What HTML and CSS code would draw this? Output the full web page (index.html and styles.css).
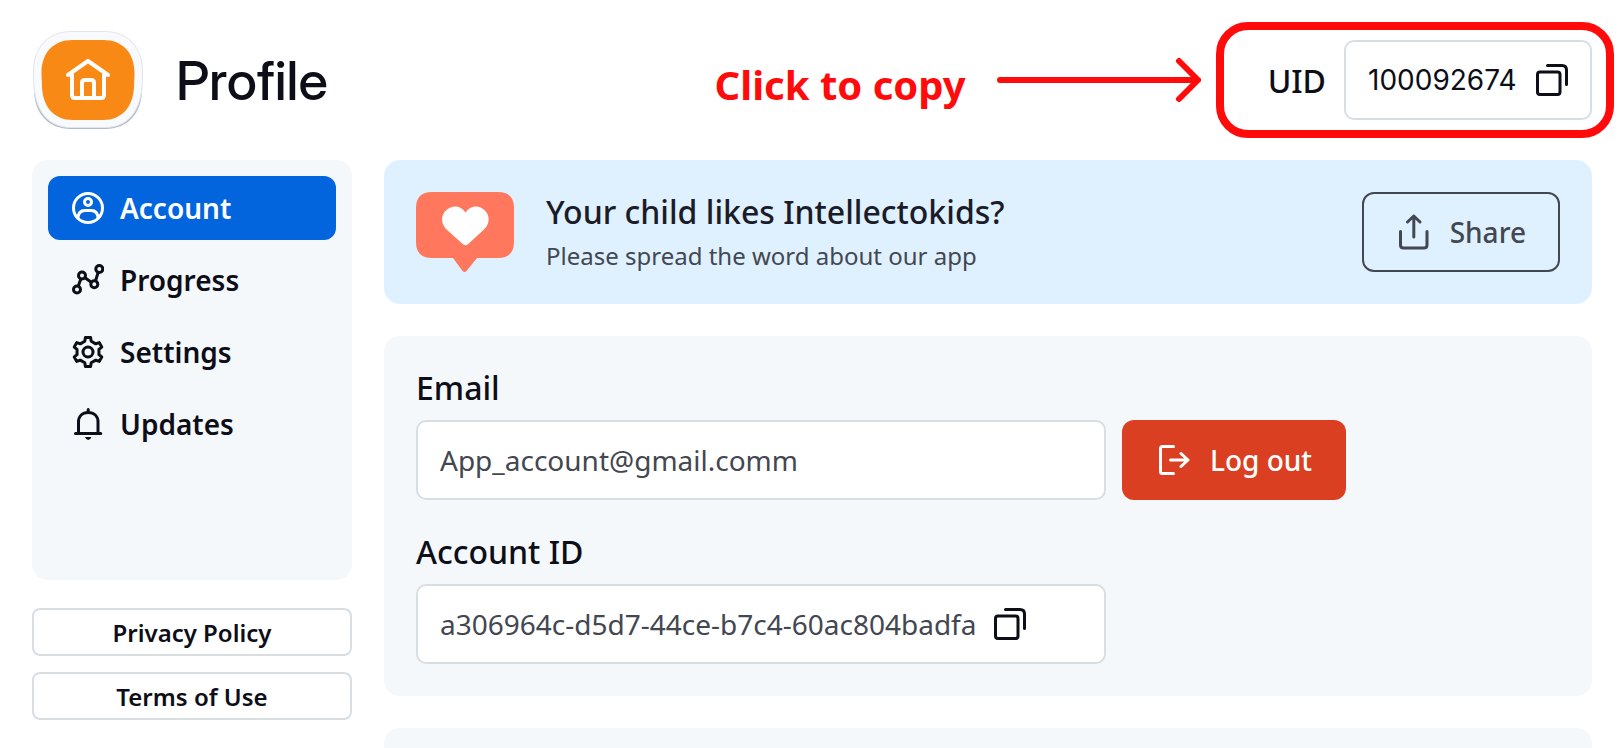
FILE: index.html
```html
<!DOCTYPE html>
<html lang="en">
<head>
    <meta charset="UTF-8">
    <meta name="viewport" content="width=device-width, initial-scale=1.0">
    <title>Profile</title>
    <link rel="stylesheet" href="styles.css">
</head>
<body>
    <header class="header">
        <a href="#" class="home-link" aria-label="Home">
            <svg class="home-icon" width="112" height="98" viewBox="-1 0 112 98">
                <path fill="#b3bccb" d="M38 1H72C95 1 109 17 109 40V58C109 82 95 98 72 98H38C15 98 1 82 1 58V40C1 17 15 1 38 1Z"/>
                <path fill="#f8fafd" stroke="#e1e5ec" d="M38 .5H72C95 .5 109.500 17 109.500 40C109.500 46 109.500 50 109 56C107 80 95 96.500 72 96.500H38C15 96.500 3 80 1 56C.5 50 .5 46 .5 40C.5 17 15 .5 38 .5Z"/>
                <path fill="#f88915" d="M40 9H70C90 9 101.500 22 101.500 42C101.500 48 101 52 101 56C100 76 89 89 70 89H40C21 89 10 76 9 56C9 52 8.500 48 8.500 42C8.500 22 20 9 40 9Z"/>
                <g fill="none" stroke="#fff" stroke-width="4" stroke-linecap="round" stroke-linejoin="round">
                    <path d="M35 44L55 30L75 44"/>
                    <path d="M39 44V64Q39 67 42 67H68Q71 67 71 64V44"/>
                    <path d="M49 66V52Q49 49 52 49H58Q61 49 61 52V66"/>
                </g>
            </svg>
        </a>
        <h1 class="page-title">Profile</h1>

        <div class="hint">
            <strong class="hint-text">Click to copy</strong>
            <svg width="206" height="46" viewBox="0 0 206 46" fill="none" stroke="#ff0b0b" stroke-width="6" stroke-linecap="round" stroke-linejoin="round">
                <path d="M4 23H202M183 4L202 23L183 42"/>
            </svg>
        </div>

        <div class="uid">
            <label for="uid" class="uid-label">UID</label>
            <div class="field uid-field">
                <input type="text" id="uid" class="field-input uid-input" value="100092674" readonly>
                <button class="copy-button" aria-label="Copy UID" onclick="copyField('uid')">
                    <svg width="32" height="32" viewBox="0 0 32 32" fill="none" stroke="currentColor" stroke-width="3" stroke-linecap="round">
                        <rect x="1.500" y="8" width="22.500" height="22.500" rx="2.500"/>
                        <path d="M11.500 1.500H26Q30.500 1.500 30.500 6V20.500"/>
                    </svg>
                </button>
            </div>
        </div>
    </header>

    <div class="layout">
        <aside class="sidebar">
            <nav class="menu">
                <a href="#" class="menu-item active">
                    <svg width="32" height="32" viewBox="0 0 32 32" fill="none" stroke="currentColor" stroke-width="3">
                        <circle cx="16" cy="16" r="14.500"/>
                        <circle cx="16" cy="10" r="3.500"/>
                        <path d="M6 26.500C6 21 8.500 18.500 13 18.500H19C23.500 18.500 26 21 26 26.500"/>
                    </svg>
                    Account
                </a>
                <a href="#" class="menu-item">
                    <svg width="32" height="32" viewBox="0 0 32 32" fill="none" stroke="currentColor" stroke-width="3">
                        <circle cx="5" cy="25.500" r="3.500"/>
                        <circle cx="10" cy="11.500" r="3.500"/>
                        <circle cx="22.300" cy="20.300" r="3.500"/>
                        <circle cx="27.300" cy="5" r="3.500"/>
                        <path d="M6.300 22L8.800 15M13 13.700L19.300 18.200M23.500 17L26.100 8.500"/>
                    </svg>
                    Progress
                </a>
                <a href="#" class="menu-item">
                    <svg width="32" height="32" viewBox="0 0 32 32" fill="none" stroke="currentColor" stroke-width="3" stroke-linejoin="round">
                        <circle cx="16" cy="16" r="5"/>
                        <path d="M12.800 5.200L13.400 1.600H18.600L19.200 5.200L23.750 7.830L27.170 6.550L29.770 11.050L26.950 13.370V18.630L29.770 20.950L27.170 25.450L23.750 24.170L19.200 26.800L18.600 30.400H13.400L12.800 26.800L8.250 24.170L4.830 25.450L2.230 20.950L5.050 18.630V13.370L2.230 11.050L4.830 6.550L8.250 7.830Z"/>
                    </svg>
                    Settings
                </a>
                <a href="#" class="menu-item">
                    <svg width="32" height="32" viewBox="0 0 32 32" fill="none" stroke="currentColor" stroke-width="3" stroke-linecap="round">
                        <path d="M3.500 25.500H28.800M6.500 25V14C6.500 8 10.500 4.500 16.200 4.500S26 8 26 14V25M16.200 1.500V4"/>
                        <path d="M13 29H19.400Q18.400 32 16.200 32T13 29Z" fill="currentColor" stroke="none"/>
                    </svg>
                    Updates
                </a>
            </nav>
            <div class="legal">
                <a href="#" class="legal-link">Privacy Policy</a>
                <a href="#" class="legal-link">Terms of Use</a>
            </div>
        </aside>

        <main class="content">
            <section class="banner">
                <svg width="98" height="80" viewBox="0 0 98 80">
                    <path fill="#ff785d" d="M16 0H82Q98 0 98 16V50Q98 66 82 66H61L50.500 79Q48.500 81 46.500 79L37 66H16Q0 66 0 50V16Q0 0 16 0Z"/>
                    <path fill="#fff" d="M49.500 20.500C45.500 14.500 39.500 13.500 34.500 15.500C25 19.500 23.500 30 30 37L47 52.300Q49.500 54.300 52 52.300L68.500 37C75.500 30 73.500 19.500 64.500 15.500C59.500 13.500 53.500 14.500 49.500 20.500Z"/>
                </svg>
                <div class="banner-text">
                    <h2 class="banner-title">Your child likes Intellectokids?</h2>
                    <p class="banner-subtitle">Please spread the word about our app</p>
                </div>
                <button class="button share-button">
                    <svg width="32" height="36" viewBox="0 0 32 36" fill="none" stroke="currentColor" stroke-width="3" stroke-linecap="round" stroke-linejoin="round">
                        <path d="M2.500 17.500V31Q2.500 34 5.500 34H26Q29 34 29 31V17.500M15.800 23V2M9.500 8L15.800 2L22 8"/>
                    </svg>
                    Share
                </button>
            </section>

            <section class="card">
                <div class="form-group">
                    <label for="email" class="form-label">Email</label>
                    <div class="form-row">
                        <div class="field">
                            <input type="email" id="email" class="field-input" value="App_account@gmail.comm" readonly>
                        </div>
                        <button class="button logout-button">
                            <svg width="32" height="32" viewBox="0 0 32 32" fill="none" stroke="currentColor" stroke-width="3" stroke-linecap="round" stroke-linejoin="round">
                                <path d="M15.500 2.500H4.500Q2.500 2.500 2.500 4.500V27.500Q2.500 29.500 4.500 29.500H15.500M12.500 16H30M23 9.500L30 16L23 22.500"/>
                            </svg>
                            Log out
                        </button>
                    </div>
                </div>
                <div class="form-group">
                    <label for="account-id" class="form-label">Account ID</label>
                    <div class="form-row">
                        <div class="field">
                            <input type="text" id="account-id" class="field-input account-input" value="a306964c-d5d7-44ce-b7c4-60ac804badfa" readonly>
                            <button class="copy-button" aria-label="Copy account ID" onclick="copyField('account-id')">
                                <svg width="32" height="32" viewBox="0 0 32 32" fill="none" stroke="currentColor" stroke-width="3" stroke-linecap="round">
                                    <rect x="1.500" y="8" width="22.500" height="22.500" rx="2.500"/>
                                    <path d="M11.500 1.500H26Q30.500 1.500 30.500 6V20.500"/>
                                </svg>
                            </button>
                        </div>
                    </div>
                </div>
            </section>

            <section class="card card-next"></section>
        </main>
    </div>

    <script>
        function copyField(id) {
            navigator.clipboard.writeText(document.getElementById(id).value);
        }
    </script>
</body>
</html>
```
FILE: styles.css
```css
* {
    box-sizing: border-box;
}

body {
    margin: 0;
    height: 100vh;
    overflow: hidden;
    display: flex;
    flex-direction: column;
    background-color: #fff;
    color: #0d0e17;
    font-family: "Noto Sans", sans-serif;
}

a {
    color: inherit;
    text-decoration: none;
}

button,
input {
    font-family: inherit;
}

svg {
    display: block;
    flex-shrink: 0;
}

/* Header */
.header {
    display: flex;
    align-items: center;
    height: 160px;
    padding: 0 32px;
}

.page-title {
    margin: 0 0 0 32px;
    font-family: "Inter Display", Inter, sans-serif;
    font-size: 54px;
    font-weight: 500;
}

.hint {
    display: flex;
    align-items: center;
    gap: 30px;
    margin-left: auto;
    margin-right: 66px;
    color: #ff0b0b;
}

.hint-text {
    padding-top: 8px;
    font-size: 40px;
    font-weight: 700;
    white-space: nowrap;
}

.uid {
    position: relative;
    display: flex;
    align-items: center;
    gap: 18px;
}

/* red frame around the UID block */
.uid::after {
    content: "";
    position: absolute;
    top: -18px;
    right: -22px;
    bottom: -18px;
    left: -52px;
    border: 8px solid #ff0b0b;
    border-radius: 32px;
    pointer-events: none;
}

.uid-label {
    font-size: 32px;
    font-weight: 500;
}

/* Fields */
.field {
    display: flex;
    align-items: center;
    gap: 18px;
    height: 80px;
    padding: 0 22px;
    background-color: #fff;
    border: 2px solid #d9dee3;
    border-radius: 10px;
}

.field-input {
    width: 100%;
    min-width: 0;
    padding: 0;
    border: none;
    outline: none;
    background: none;
    color: #434751;
    font-size: 28px;
}

.uid-input {
    width: 150px;
    color: #0d0e17;
    font-family: Inter, sans-serif;
}

.account-input {
    width: 536px;
}

.copy-button {
    padding: 0;
    border: none;
    background: none;
    color: #0d0e17;
    cursor: pointer;
}

/* Layout */
.layout {
    flex: 1;
    min-height: 0;
    display: grid;
    grid-template-columns: 320px minmax(0, 1fr);
    gap: 32px;
    padding: 0 32px;
}

.menu {
    display: flex;
    flex-direction: column;
    gap: 8px;
    min-height: 420px;
    padding: 16px;
    background-color: #f4f8fb;
    border-radius: 16px;
}

.menu-item {
    display: flex;
    align-items: center;
    gap: 16px;
    height: 64px;
    padding: 0 24px;
    border-radius: 12px;
    font-size: 28px;
    font-weight: 600;
}

.menu-item.active {
    background-color: #0365de;
    color: #fff;
}

.legal {
    display: flex;
    flex-direction: column;
    gap: 16px;
    margin-top: 28px;
}

.legal-link {
    display: flex;
    align-items: center;
    justify-content: center;
    height: 48px;
    border: 2px solid #d9dee3;
    border-radius: 8px;
    font-size: 24px;
    font-weight: 600;
}

.content {
    display: flex;
    flex-direction: column;
    gap: 32px;
    min-height: 0;
}

/* Share banner */
.banner {
    display: flex;
    align-items: center;
    gap: 32px;
    padding: 32px;
    background-color: #dff1ff;
    border-radius: 16px;
}

.banner-title {
    margin: 0;
    color: #1b1c28;
    font-size: 32px;
    font-weight: 500;
    line-height: 40px;
}

.banner-subtitle {
    margin: 8px 0 0;
    color: #434751;
    font-size: 24px;
    line-height: 32px;
}

.button {
    display: flex;
    align-items: center;
    gap: 20px;
    height: 80px;
    padding: 0 32px 0 34px;
    border: 2px solid transparent;
    border-radius: 12px;
    font-size: 28px;
    font-weight: 500;
    cursor: pointer;
}

.share-button {
    margin-left: auto;
    background: none;
    border-color: #434751;
    color: #434751;
}

.logout-button {
    background-color: #da3f21;
    color: #fff;
}

/* Cards */
.card {
    display: flex;
    flex-direction: column;
    gap: 32px;
    padding: 32px;
    background-color: #f4f8fb;
    border-radius: 16px;
}

.card-next {
    flex: 1;
    padding: 0;
    border-radius: 16px 16px 0 0;
}

.form-label {
    display: block;
    margin-bottom: 12px;
    font-size: 32px;
    font-weight: 500;
    line-height: 40px;
}

.form-row {
    display: grid;
    grid-template-columns: minmax(0, 690px) auto;
    justify-content: start;
    gap: 16px;
}
```
